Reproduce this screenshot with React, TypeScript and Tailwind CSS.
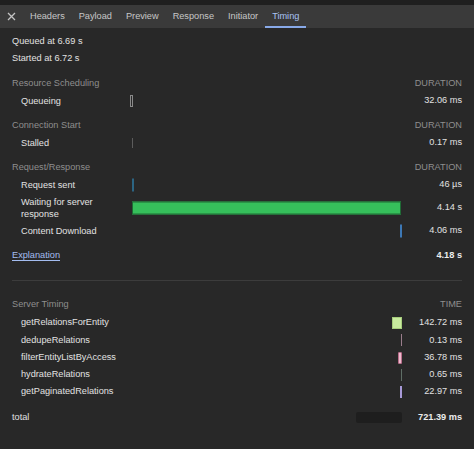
import React from "react";

type Bar = {
  left: number;
  width: number;
  height: number;
  className: string;
};

type Row = {
  label: string[];
  value: string;
  bar: Bar;
};

const font = { fontFamily: '"Liberation Sans", Arial, Helvetica, sans-serif' };

const tabs = ["Headers", "Payload", "Preview", "Response", "Initiator", "Timing"];

const sections: { title: string; rows: Row[] }[] = [
  {
    title: "Resource Scheduling",
    rows: [
      {
        label: ["Queueing"],
        value: "32.06 ms",
        bar: { left: -1, width: 3, height: 12, className: "border border-[#8a8a8a]" },
      },
    ],
  },
  {
    title: "Connection Start",
    rows: [
      {
        label: ["Stalled"],
        value: "0.17 ms",
        bar: { left: 1, width: 1, height: 10, className: "bg-[#5c5c5c]" },
      },
    ],
  },
  {
    title: "Request/Response",
    rows: [
      {
        label: ["Request sent"],
        value: "46 µs",
        bar: { left: 1, width: 2, height: 13, className: "bg-[#2c6583]" },
      },
      {
        label: ["Waiting for server", "response"],
        value: "4.14 s",
        bar: {
          left: 1,
          width: 269,
          height: 13,
          className: "bg-[#36bf5b] border border-[#1f6a35]",
        },
      },
      {
        label: ["Content Download"],
        value: "4.06 ms",
        bar: { left: 269, width: 2, height: 13, className: "bg-[#3d78b5]" },
      },
    ],
  },
];

const serverRows: { name: string; value: string; bar: React.ReactNode }[] = [
  {
    name: "getRelationsForEntity",
    value: "142.72 ms",
    bar: <div className="h-[12px] w-[10px] bg-[#c8eb9e] border border-[#a6cc7c]" />,
  },
  {
    name: "dedupeRelations",
    value: "0.13 ms",
    bar: <div className="h-[12px] w-px bg-[#9b7d8c]" />,
  },
  {
    name: "filterEntityListByAccess",
    value: "36.78 ms",
    bar: <div className="h-[12px] w-[4px] rounded-[1px] bg-[#ecbccd] border border-[#b86c8a]" />,
  },
  {
    name: "hydrateRelations",
    value: "0.65 ms",
    bar: <div className="h-[12px] w-px bg-[#5f6e66]" />,
  },
  {
    name: "getPaginatedRelations",
    value: "22.97 ms",
    bar: <div className="h-[12px] w-[2px] bg-[#a89ad8]" />,
  },
];

function TimingRow({ row }: { row: Row }) {
  const tall = row.label.length > 1;
  return (
    <div className={`flex items-center ${tall ? "h-[29px]" : "h-[17px]"}`}>
      <div className="w-[119px] pl-[9px] leading-[12px] text-[#e2e2e2]">
        {row.label.map((l) => (
          <div key={l}>{l}</div>
        ))}
      </div>
      <div className="relative h-full flex-1">
        <div
          className={`absolute top-1/2 -translate-y-1/2 ${row.bar.className}`}
          style={{ left: row.bar.left, width: row.bar.width, height: row.bar.height }}
        />
      </div>
      <div className="w-[60px] text-right text-[#e2e2e2]">{row.value}</div>
    </div>
  );
}

function SectionHeader({ title, right }: { title: string; right: string }) {
  return (
    <div className="flex h-[17px] items-center justify-between text-[#8e8e8e]">
      <span>{title}</span>
      <span>{right}</span>
    </div>
  );
}

export default function App() {
  return (
    <div className="h-[449px] w-[474px] overflow-hidden bg-[#282828] text-[9.2px]" style={font}>
      <div className="h-[5px] bg-[#1f1f1f]" />
      <div className="flex h-[23px] items-stretch bg-[#3a3a3a] text-[#c7c7c7]">
        <div className="flex w-[23px] items-center justify-center">
          <svg width="9" height="9" viewBox="0 0 9 9" fill="none">
            <path d="M1 1L8 8M8 1L1 8" stroke="#c4c4c4" strokeWidth="1.3" />
          </svg>
        </div>
        {tabs.map((t) => (
          <div
            key={t}
            className={`flex items-center px-[7px] pt-[2px] border-b-2 ${
              t === "Timing" ? "border-[#88a9e8] text-[#a8c4f5]" : "border-transparent"
            }`}
          >
            {t}
          </div>
        ))}
      </div>

      <div className="px-3 pt-[5.5px]">
        <div className="flex h-[17px] items-center text-[#e2e2e2]">Queued at 6.69 s</div>
        <div className="flex h-[17px] items-center text-[#e2e2e2]">Started at 6.72 s</div>

        {sections.map((s) => (
          <div key={s.title} className="mt-2">
            <SectionHeader title={s.title} right="DURATION" />
            {s.rows.map((r) => (
              <TimingRow key={r.value} row={r} />
            ))}
          </div>
        ))}

        <div className="mt-2 flex h-[17px] items-center justify-between">
          <span className="text-[#a4bdf0] underline underline-offset-2">Explanation</span>
          <span className="font-bold text-[#ececec]">4.18 s</span>
        </div>

        <div className="mt-[15px] h-px bg-[#3c3c3c]" />

        <div className="mt-[16px]">
          <div className="mb-[1px]">
            <SectionHeader title="Server Timing" right="TIME" />
          </div>
          {serverRows.map((r) => (
            <div key={r.name} className="flex h-[17.3px] items-center">
              <div className="flex-1 pl-[9px] text-[#e2e2e2]">{r.name}</div>
              <div className="flex w-[20px] justify-end">{r.bar}</div>
              <div className="w-[60px] text-right text-[#e2e2e2]">{r.value}</div>
            </div>
          ))}
        </div>

        <div className="mt-2 flex h-[17px] items-center">
          <div className="flex-1 text-[#e2e2e2]">total</div>
          <div className="flex w-[60px] justify-end">
            <div className="h-[11px] w-[46px] rounded-[2px] bg-[#1e1e1e]" />
          </div>
          <div className="w-[60px] text-right font-bold text-[#ececec]">721.39 ms</div>
        </div>
      </div>
    </div>
  );
}
